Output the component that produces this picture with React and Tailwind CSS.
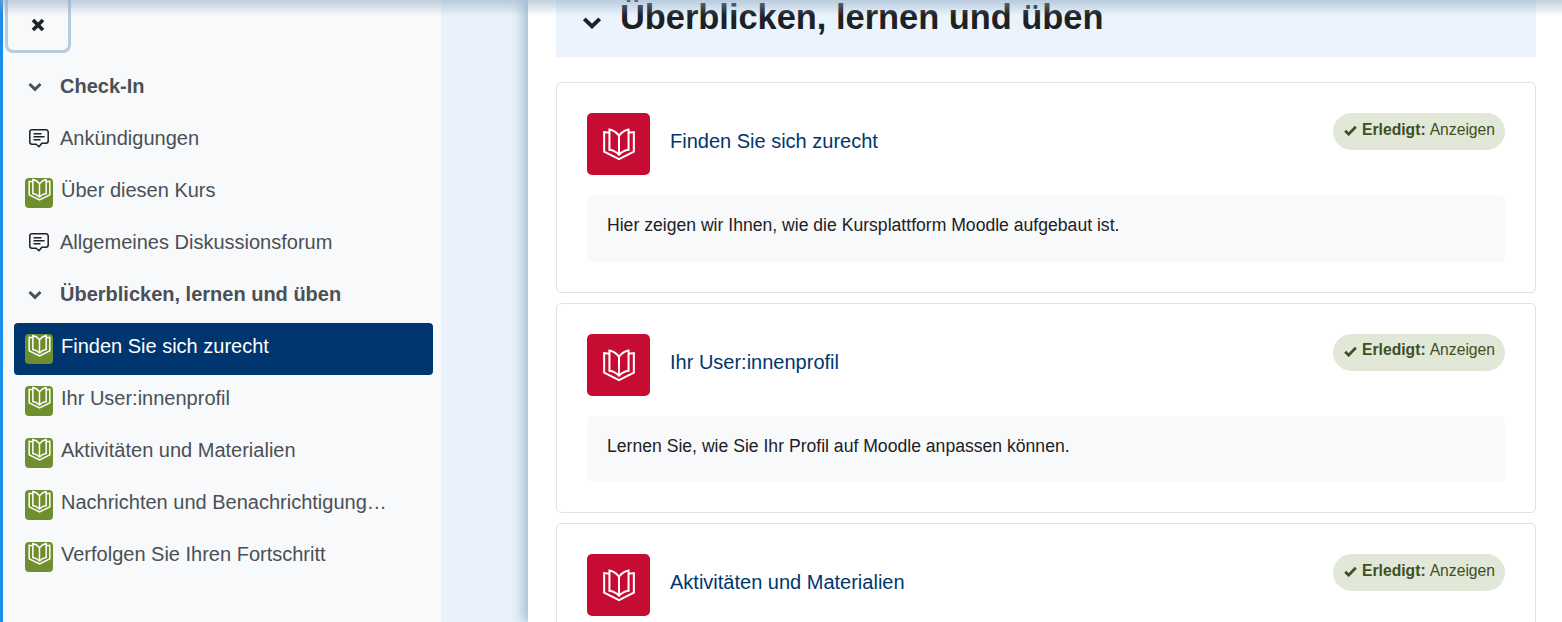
const sans = { fontFamily: '"Liberation Sans", Arial, sans-serif' };

function Book({ className, sw = 1.8 }) {
  return (
    <svg viewBox="0 0 32 32" fill="none" stroke="currentColor" strokeWidth={sw} strokeLinejoin="miter" className={className}>
      <path d="M16 8.5C13.5 5.6 10.5 3.6 7.5 3.2v18c3 .4 6 1.8 8.5 4.3 2.5-2.5 5.5-3.9 8.5-4.3v-18c-3 .4-6 2.4-8.5 5.3Z" />
      <path d="M16 8.5v17" />
      <path d="M7.5 6 2.8 5.4v17.4L16 29.4l13.2-6.6V5.4l-4.7.6" />
    </svg>
  );
}

function Forum() {
  return (
    <svg viewBox="0 0 20 19" fill="none" stroke="#1d2125" strokeWidth="1.5" className="w-[20px] h-[19px]">
      <path d="M3 .8h14a2.2 2.2 0 0 1 2.2 2.2v9a2.2 2.2 0 0 1-2.2 2.2h-4.2L10 17.8l-2.8-2.6H3A2.2 2.2 0 0 1 .8 13V3A2.2 2.2 0 0 1 3 .8Z" strokeLinejoin="round" />
      <path d="M4.5 4.8h8M4.5 7.8h11M4.5 10.8h7" strokeWidth="1.4" />
    </svg>
  );
}

function Chevron({ className, sw = 3 }) {
  return (
    <svg viewBox="0 0 14 10" fill="none" stroke="currentColor" strokeWidth={sw} className={className}>
      <path d="M1.5 2 7 7.4 12.5 2" />
    </svg>
  );
}

function SectionRow({ label }) {
  return (
    <div className="h-[52px] flex items-center pl-[25px] shrink-0">
      <Chevron className="w-[14px] h-[10px] text-[#495057] mr-[18px] mt-[2px]" />
      <span className="text-[20px] font-bold text-[#495057]">{label}</span>
    </div>
  );
}

function ForumRow({ label }) {
  return (
    <div className="h-[52px] flex items-center pl-[22px] shrink-0">
      <span className="w-[28px] flex justify-center mr-[7px]"><Forum /></span>
      <span className="text-[20px] text-[#495057]">{label}</span>
    </div>
  );
}

function BookRow({ label, active }) {
  return (
    <div className={`h-[52px] mt-[3px] -mb-[3px] flex items-center pl-[11px] ml-[11px] w-[419px] rounded-[4px] shrink-0 ${active ? "bg-[#00366f]" : ""}`}>
      <span className="w-[28px] h-[30px] rounded-[4px] bg-[#6f8f2f] text-white flex justify-center items-start mr-[8px] shrink-0">
        <Book className="w-[25px] h-[25px] -mt-[1px]" sw={1.9} />
      </span>
      <span className={`text-[20px] truncate max-w-[327px] pb-[6px] ${active ? "text-white" : "text-[#495057]"}`}>{label}</span>
    </div>
  );
}

function Card({ title, text }) {
  return (
    <div className="border border-[#dee2e6] rounded-[5px] bg-white px-[30px] pt-[30px] h-[210.5px] shrink-0">
      <div className="flex items-start justify-between">
        <div className="flex items-center">
          <div className="w-[63px] h-[62px] rounded-[5px] bg-[#c70c33] text-white flex items-center justify-center">
            <Book className="w-[36px] h-[36px]" />
          </div>
          <span className="ml-[20px] text-[20px] text-[#00366f] pb-[6px]">{title}</span>
        </div>
        <div className="h-[37px] w-[172px] rounded-full bg-[#e1e8d7] text-[#3f4f1f] flex items-center pl-[11px] text-[15.7px] pb-[4px]">
          <svg viewBox="0 0 14 12" className="w-[13px] h-[11px] mr-[5px] mt-[2px]" fill="none" stroke="currentColor" strokeWidth="3">
            <path d="M1.2 6.2 5 10 12.8 2" />
          </svg>
          <b className="font-bold">Erledigt:</b>
          <span className="ml-[4px]">Anzeigen</span>
        </div>
      </div>
      <div className="mt-[20px] h-[66.5px] rounded-[5px] bg-[#f8f9fa] px-[20px] pb-[6px] flex items-center text-[17.6px] text-[#1d2125]">
        {text}
      </div>
    </div>
  );
}

export default function App() {
  return (
    <div style={sans} className="relative w-[1562px] h-[622px] overflow-hidden flex bg-white">
      <div className="w-[3px] shrink-0 bg-[#1a8ceb]" />
      <aside className="w-[438px] shrink-0 bg-[#f8f9fa] flex flex-col">
        <div className="h-[60px] shrink-0 pl-[2px]">
          <div className="w-[66px] h-[53px] border-[3px] border-t-0 border-[#b9cbdd] rounded-b-[8px] bg-[#f8f9fa] flex items-center justify-center">
            <svg viewBox="0 0 14 14" className="w-[14px] h-[14px]" stroke="#1d2125" strokeWidth="3.6" fill="none">
              <path d="M2 2l10 10M12 2 2 12" />
            </svg>
          </div>
        </div>
        <SectionRow label="Check-In" />
        <ForumRow label="Ankündigungen" />
        <BookRow label="Über diesen Kurs" />
        <ForumRow label="Allgemeines Diskussionsforum" />
        <SectionRow label="Überblicken, lernen und üben" />
        <BookRow label="Finden Sie sich zurecht" active />
        <BookRow label="Ihr User:innenprofil" />
        <BookRow label="Aktivitäten und Materialien" />
        <BookRow label="Nachrichten und Benachrichtigungen" />
        <BookRow label="Verfolgen Sie Ihren Fortschritt" />
      </aside>
      <div className="w-[87px] shrink-0 bg-[#e9f2fb]" />
      <main className="relative flex-1 bg-white pl-[28px] pr-[26px] shadow-[-6px_0_10px_rgba(80,120,160,0.4)] flex flex-col">
        <div className="h-[57px] shrink-0 bg-[#ebf4fc] flex items-center pl-[26px] pb-[24px] overflow-hidden">
          <Chevron sw={2.8} className="w-[20px] h-[14px] text-[#1d2125] mr-[18px] mt-[12px]" />
          <h2 className="text-[34.4px] leading-[40px] font-bold text-[#1d2125]">Überblicken, lernen und üben</h2>
        </div>
        <div className="mt-[25px] flex flex-col gap-[10px]">
          <Card title="Finden Sie sich zurecht" text="Hier zeigen wir Ihnen, wie die Kursplattform Moodle aufgebaut ist." />
          <Card title="Ihr User:innenprofil" text="Lernen Sie, wie Sie Ihr Profil auf Moodle anpassen können." />
          <Card title="Aktivitäten und Materialien" text="" />
        </div>
      </main>
      <div className="absolute top-0 left-0 right-0 h-[16px] bg-gradient-to-b from-[#8ea9c4]/55 to-transparent pointer-events-none" />
    </div>
  );
}
